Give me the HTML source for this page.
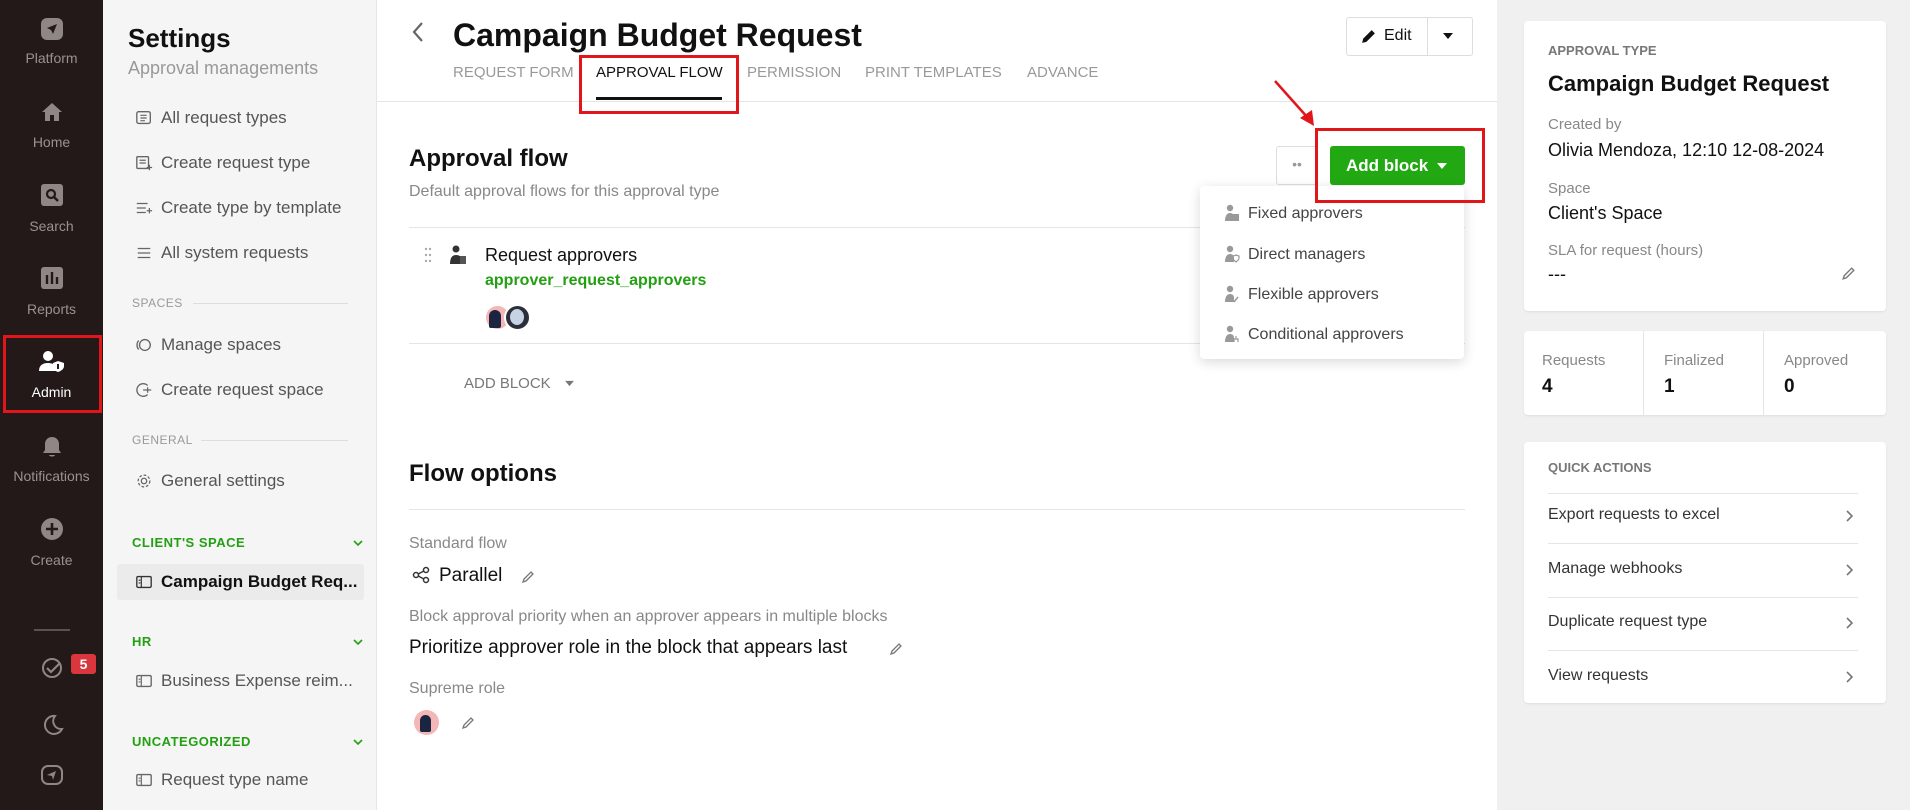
<!DOCTYPE html>
<html><head><meta charset="utf-8"><style>
*{margin:0;padding:0;box-sizing:border-box}
body{width:1910px;height:810px;overflow:hidden;font-family:"Liberation Sans",sans-serif;background:#f0f0f0;position:relative;color:#111}
.a{position:absolute;white-space:nowrap}
#nav{left:0;top:0;width:103px;height:810px;background:#231918}
.ni{position:absolute;left:0;width:103px;text-align:center;color:#9a9290;font-size:14px}
.ic{position:absolute;left:40px;width:24px;height:24px}
#set{left:103px;top:0;width:274px;height:810px;background:#f5f5f5;border-right:1px solid #e6e6e6}
.si{position:absolute;left:58px;font-size:17px;color:#555;line-height:24px}
.sic{position:absolute;left:32px;width:18px;height:18px}
.sh{position:absolute;left:29px;font-size:12px;color:#999;letter-spacing:.5px;line-height:16px}
.gh{position:absolute;left:29px;font-size:13px;color:#22a012;font-weight:bold;letter-spacing:.5px;line-height:16px}
.chev{position:absolute;left:250px;width:10px;height:10px}
#main{left:377px;top:0;width:1120px;height:810px;background:#fff}
.tab{position:absolute;top:64px;font-size:15px;color:#999;line-height:18px}
.card{position:absolute;left:1524px;width:362px;background:#fff;border-radius:4px;box-shadow:0 1px 2px rgba(0,0,0,.08)}
.lbl{position:absolute;left:24px;font-size:15px;color:#888;line-height:20px}
.val{position:absolute;left:24px;font-size:18px;color:#111;line-height:22px}
.qa{position:absolute;left:24px;width:300px;font-size:16px;color:#333;line-height:22px}
.qline{position:absolute;left:24px;width:310px;height:1px;background:#e5e5e5}
.red{position:absolute;border:3px solid #e0161b}
.mi{position:absolute;left:48px;font-size:16px;color:#444;line-height:20px}
</style></head><body>

<div id="nav" class="a">
 <svg class="ic" style="top:17px" viewBox="0 0 24 24"><rect x="1" y="1" width="22" height="22" rx="6" fill="#8e8785"/><path d="M17 7L7 11l4 2 2 4z" fill="#231918"/></svg>
 <div class="ni" style="top:50px">Platform</div>
 <svg class="ic" style="top:100px" viewBox="0 0 24 24"><path d="M12 3L2 12h3v9h5v-6h4v6h5v-9h3z" fill="#8e8785"/></svg>
 <div class="ni" style="top:134px">Home</div>
 <svg class="ic" style="top:183px" viewBox="0 0 24 24"><rect x="1" y="1" width="22" height="22" rx="3" fill="#8e8785"/><circle cx="11" cy="11" r="4" fill="none" stroke="#231918" stroke-width="2.2"/><path d="M14 14l4 4" stroke="#231918" stroke-width="2.4"/></svg>
 <div class="ni" style="top:218px">Search</div>
 <svg class="ic" style="top:266px" viewBox="0 0 24 24"><rect x="1" y="1" width="22" height="22" rx="3" fill="#8e8785"/><path d="M7 9v9M12 6v12M17 11v7" stroke="#231918" stroke-width="2.4"/></svg>
 <div class="ni" style="top:301px">Reports</div>
 <svg class="ic" style="top:350px;left:38px;width:28px" viewBox="0 0 28 24"><circle cx="10" cy="6" r="5" fill="#fff"/><path d="M1 21c0-6 4-8 9-8s7 2 8 4v4z" fill="#fff"/><path d="M20 11l6 2v3c0 3-3 5-6 6-3-1-5-3-5-6v-3z" fill="#fff"/><path d="M20 14v5" stroke="#231918" stroke-width="2"/></svg>
 <div class="ni" style="top:384px;color:#fff">Admin</div>
 <svg class="ic" style="top:435px" viewBox="0 0 24 24"><path d="M12 2c-4 0-7 3-7 7v6l-2 3h18l-2-3V9c0-4-3-7-7-7z M9 20h6c0 2-6 2-6 0z" fill="#8e8785"/></svg>
 <div class="ni" style="top:468px">Notifications</div>
 <svg class="ic" style="top:517px" viewBox="0 0 24 24"><circle cx="12" cy="12" r="11" fill="#8e8785"/><path d="M12 6v12M6 12h12" stroke="#231918" stroke-width="2.6"/></svg>
 <div class="ni" style="top:552px">Create</div>
 <div class="a" style="left:34px;top:629px;width:36px;height:2px;background:#5a5150"></div>
 <svg class="ic" style="top:656px" viewBox="0 0 24 24"><circle cx="12" cy="12" r="9" fill="none" stroke="#8e8785" stroke-width="2"/><path d="M7 12l4 4 9-9" fill="none" stroke="#8e8785" stroke-width="2.2"/></svg>
 <div class="a" style="left:71px;top:654px;width:25px;height:20px;background:#d9363e;border-radius:3px;color:#fff;font-size:14px;font-weight:bold;text-align:center;line-height:20px">5</div>
 <svg class="ic" style="top:713px" viewBox="0 0 24 24"><path d="M15 3a9 9 0 1 0 7 13A8 8 0 0 1 15 3z" fill="none" stroke="#8e8785" stroke-width="2"/></svg>
 <svg class="ic" style="top:763px" viewBox="0 0 24 24"><rect x="2" y="3" width="20" height="18" rx="6" fill="none" stroke="#8e8785" stroke-width="2"/><path d="M16 8l-9 4 5 1 1 4z" fill="#8e8785"/></svg>
</div>
<div class="red" style="left:3px;top:335px;width:99px;height:78px"></div>

<div id="set" class="a">
 <div class="a" style="left:25px;top:22px;font-size:26px;font-weight:bold;line-height:32px">Settings</div>
 <div class="a" style="left:25px;top:57px;font-size:18px;color:#999;line-height:22px">Approval managements</div>
 <svg class="sic" style="top:109px" viewBox="0 0 20 20"><rect x="2" y="3" width="15" height="13" rx="2" fill="none" stroke="#666" stroke-width="1.5"/><path d="M6 7h7M6 10h7M6 13h5" stroke="#666" stroke-width="1.3"/></svg>
 <div class="si" style="top:106px">All request types</div>
 <svg class="sic" style="top:154px" viewBox="0 0 20 20"><rect x="2" y="3" width="13" height="13" rx="1" fill="none" stroke="#666" stroke-width="1.5"/><path d="M5 7h7M5 10h7M13 15h6M16 12v6" stroke="#666" stroke-width="1.4"/></svg>
 <div class="si" style="top:151px">Create request type</div>
 <svg class="sic" style="top:199px" viewBox="0 0 20 20"><path d="M2 5h12M2 10h10M2 15h10M13 13h6M16 10v6" stroke="#666" stroke-width="1.4"/></svg>
 <div class="si" style="top:196px">Create type by template</div>
 <svg class="sic" style="top:244px" viewBox="0 0 20 20"><path d="M3 5h14M3 10h14M3 15h14" stroke="#666" stroke-width="1.4"/></svg>
 <div class="si" style="top:241px">All system requests</div>
 <div class="sh" style="top:295px">SPACES</div>
 <div class="a" style="left:90px;top:303px;width:155px;height:1px;background:#ddd"></div>
 <svg class="sic" style="top:336px" viewBox="0 0 20 20"><circle cx="11" cy="10" r="6" fill="none" stroke="#666" stroke-width="1.5"/><path d="M4 5a8 8 0 0 0 0 10" fill="none" stroke="#666" stroke-width="1.5"/></svg>
 <div class="si" style="top:333px">Manage spaces</div>
 <svg class="sic" style="top:381px" viewBox="0 0 20 20"><path d="M14 5a7 7 0 1 0 0 10" fill="none" stroke="#666" stroke-width="1.5"/><path d="M9 10h9M14 7v6" stroke="#666" stroke-width="1.4"/></svg>
 <div class="si" style="top:378px">Create request space</div>
 <div class="sh" style="top:432px">GENERAL</div>
 <div class="a" style="left:98px;top:440px;width:147px;height:1px;background:#ddd"></div>
 <svg class="sic" style="top:472px" viewBox="0 0 20 20"><circle cx="10" cy="10" r="3" fill="none" stroke="#666" stroke-width="1.4"/><circle cx="10" cy="10" r="6.5" fill="none" stroke="#666" stroke-width="1.4" stroke-dasharray="3 2"/></svg>
 <div class="si" style="top:469px">General settings</div>
 <div class="gh" style="top:535px">CLIENT'S SPACE</div>
 <svg class="chev" style="top:538px" viewBox="0 0 10 10"><path d="M1 3l4 4 4-4" fill="none" stroke="#22a012" stroke-width="1.6"/></svg>
 <div class="a" style="left:14px;top:564px;width:247px;height:36px;background:#ebebeb;border-radius:3px"></div>
 <svg class="sic" style="top:573px" viewBox="0 0 20 20"><rect x="2" y="4" width="16" height="12" rx="1.5" fill="none" stroke="#333" stroke-width="1.5"/><path d="M7 4v12M4 8h2M4 11h2" stroke="#333" stroke-width="1.3"/></svg>
 <div class="si" style="top:570px;color:#111;font-weight:bold">Campaign Budget Req...</div>
 <div class="gh" style="top:634px">HR</div>
 <svg class="chev" style="top:637px" viewBox="0 0 10 10"><path d="M1 3l4 4 4-4" fill="none" stroke="#22a012" stroke-width="1.6"/></svg>
 <svg class="sic" style="top:672px" viewBox="0 0 20 20"><rect x="2" y="4" width="16" height="12" rx="1.5" fill="none" stroke="#666" stroke-width="1.5"/><path d="M7 4v12M4 8h2M4 11h2" stroke="#666" stroke-width="1.3"/></svg>
 <div class="si" style="top:669px">Business Expense reim...</div>
 <div class="gh" style="top:734px">UNCATEGORIZED</div>
 <svg class="chev" style="top:737px" viewBox="0 0 10 10"><path d="M1 3l4 4 4-4" fill="none" stroke="#22a012" stroke-width="1.6"/></svg>
 <svg class="sic" style="top:771px" viewBox="0 0 20 20"><rect x="2" y="4" width="16" height="12" rx="1.5" fill="none" stroke="#666" stroke-width="1.5"/><path d="M7 4v12M4 8h2M4 11h2" stroke="#666" stroke-width="1.3"/></svg>
 <div class="si" style="top:768px">Request type name</div>
</div>

<div id="main" class="a">
 <svg class="a" style="left:33px;top:20px;width:16px;height:24px" viewBox="0 0 16 24"><path d="M12 3L4 12l8 9" fill="none" stroke="#666" stroke-width="2.2"/></svg>
 <div class="a" style="left:76px;top:15px;font-size:32px;font-weight:bold;line-height:40px">Campaign Budget Request</div>
 <div class="tab" style="left:76px">REQUEST FORM</div>
 <div class="tab" style="left:219px;color:#111">APPROVAL FLOW</div>
 <div class="a" style="left:219px;top:97px;width:126px;height:3px;background:#111"></div>
 <div class="tab" style="left:370px">PERMISSION</div>
 <div class="tab" style="left:488px">PRINT TEMPLATES</div>
 <div class="tab" style="left:650px">ADVANCE</div>
 <div class="a" style="left:0;top:101px;width:1120px;height:1px;background:#e5e5e5"></div>
 <div class="a" style="left:969px;top:17px;width:127px;height:39px;border:1px solid #ddd;border-radius:3px"></div>
 <div class="a" style="left:1050px;top:18px;width:1px;height:37px;background:#ddd"></div>
 <svg class="a" style="left:983px;top:28px;width:17px;height:17px" viewBox="0 0 16 16"><path d="M2 14l1-4 8-8 3 3-8 8z" fill="#111"/></svg>
 <div class="a" style="left:1007px;top:26px;font-size:16px;line-height:20px">Edit</div>
 <svg class="a" style="left:1066px;top:32px;width:10px;height:8px" viewBox="0 0 10 8"><path d="M0 1h10L5 7z" fill="#111"/></svg>

 <div class="a" style="left:32px;top:144px;font-size:24px;font-weight:bold;line-height:30px">Approval flow</div>
 <div class="a" style="left:32px;top:182px;font-size:16px;color:#888;line-height:20px">Default approval flows for this approval type</div>
 <div class="a" style="left:899px;top:146px;width:42px;height:39px;border:1px solid #ddd;border-radius:3px;color:#999;text-align:center;font-size:14px;line-height:34px">••</div>
 <div class="a" style="left:953px;top:146px;width:135px;height:39px;background:#22a812;border-radius:3px;color:#fff;font-size:17px;font-weight:bold;line-height:39px;padding-left:16px">Add block</div>
 <svg class="a" style="left:1060px;top:162px;width:10px;height:8px" viewBox="0 0 10 8"><path d="M0 1h10L5 7z" fill="#fff"/></svg>
 <div class="a" style="left:32px;top:227px;width:1056px;height:1px;background:#e5e5e5"></div>
 <svg class="a" style="left:47px;top:247px;width:8px;height:16px" viewBox="0 0 8 16"><g fill="#aaa"><circle cx="2" cy="2" r="1.2"/><circle cx="6" cy="2" r="1.2"/><circle cx="2" cy="8" r="1.2"/><circle cx="6" cy="8" r="1.2"/><circle cx="2" cy="14" r="1.2"/><circle cx="6" cy="14" r="1.2"/></g></svg>
 <svg class="a" style="left:72px;top:245px;width:18px;height:20px" viewBox="0 0 18 20"><circle cx="7" cy="4" r="3.5" fill="#333"/><path d="M1 19c0-6 2-9 6-9s5 2 5 4v5z" fill="#333"/><rect x="11" y="11" width="6" height="8" fill="#555"/></svg>
 <div class="a" style="left:108px;top:244px;font-size:18px;line-height:22px">Request approvers</div>
 <div class="a" style="left:108px;top:271px;font-size:16px;color:#22a012;font-weight:bold;line-height:20px">approver_request_approvers</div>
 <div class="a" style="left:107px;top:304px;width:27px;height:27px;border-radius:50%;background:#f4b6b6;border:2px solid #fff"></div>
 <div class="a" style="left:112px;top:310px;width:12px;height:18px;border-radius:6px 6px 2px 2px;background:#1c2540"></div>
 <div class="a" style="left:127px;top:304px;width:27px;height:27px;border-radius:50%;background:#2b2f3a;border:2px solid #fff"></div>
 <div class="a" style="left:133px;top:309px;width:14px;height:16px;border-radius:50%;background:#c7d2e3"></div>
 <div class="a" style="left:32px;top:343px;width:1056px;height:1px;background:#e5e5e5"></div>
 <div class="a" style="left:87px;top:375px;font-size:15px;color:#777;line-height:18px">ADD BLOCK</div>
 <svg class="a" style="left:188px;top:380px;width:9px;height:7px" viewBox="0 0 10 8"><path d="M0 1h10L5 7z" fill="#777"/></svg>

 <div class="a" style="left:32px;top:459px;font-size:24px;font-weight:bold;line-height:30px">Flow options</div>
 <div class="a" style="left:32px;top:509px;width:1056px;height:1px;background:#e5e5e5"></div>
 <div class="a" style="left:32px;top:534px;font-size:16px;color:#888;line-height:20px">Standard flow</div>
 <svg class="a" style="left:35px;top:566px;width:18px;height:18px" viewBox="0 0 18 18"><circle cx="4" cy="9" r="2.5" fill="none" stroke="#333" stroke-width="1.5"/><circle cx="14" cy="4" r="2.5" fill="none" stroke="#333" stroke-width="1.5"/><circle cx="14" cy="14" r="2.5" fill="none" stroke="#333" stroke-width="1.5"/><path d="M6 8l6-3M6 10l6 3" stroke="#333" stroke-width="1.5"/></svg>
 <div class="a" style="left:62px;top:565px;font-size:19px;line-height:22px">Parallel</div>
 <svg class="a" style="left:143px;top:569px;width:16px;height:16px" viewBox="0 0 16 16"><path d="M3 13l1-3 7-7 2 2-7 7z" fill="none" stroke="#777" stroke-width="1.3"/></svg>
 <div class="a" style="left:32px;top:607px;font-size:16px;color:#888;line-height:20px">Block approval priority when an approver appears in multiple blocks</div>
 <div class="a" style="left:32px;top:637px;font-size:19px;line-height:22px">Prioritize approver role in the block that appears last</div>
 <svg class="a" style="left:511px;top:641px;width:16px;height:16px" viewBox="0 0 16 16"><path d="M3 13l1-3 7-7 2 2-7 7z" fill="none" stroke="#777" stroke-width="1.3"/></svg>
 <div class="a" style="left:32px;top:679px;font-size:16px;color:#888;line-height:20px">Supreme role</div>
 <div class="a" style="left:37px;top:710px;width:25px;height:25px;border-radius:50%;background:#f4b6b6"></div>
 <div class="a" style="left:43px;top:715px;width:11px;height:17px;border-radius:6px 6px 2px 2px;background:#1c2540"></div>
 <svg class="a" style="left:83px;top:715px;width:16px;height:16px" viewBox="0 0 16 16"><path d="M3 13l1-3 7-7 2 2-7 7z" fill="none" stroke="#777" stroke-width="1.3"/></svg>

 <div class="a" style="left:823px;top:186px;width:264px;height:173px;background:#fff;border-radius:4px;box-shadow:0 3px 12px rgba(0,0,0,.15)">
  <svg class="a" style="left:24px;top:18px;width:16px;height:18px" viewBox="0 0 16 18"><circle cx="6" cy="4" r="3.2" fill="#999"/><path d="M1 17c0-5 2-8 5-8s4 2 4 4v4z" fill="#999"/><rect x="9" y="10" width="6" height="7" fill="#999"/></svg>
  <div class="mi" style="top:18px">Fixed approvers</div>
  <svg class="a" style="left:24px;top:59px;width:16px;height:18px" viewBox="0 0 16 18"><circle cx="6" cy="4" r="3.2" fill="#999"/><path d="M1 17c0-5 2-8 5-8s4 2 4 4v4z" fill="#999"/><path d="M12 10l3 1v2c0 2-2 3-3 4-1-1-3-2-3-4v-2z" fill="none" stroke="#999" stroke-width="1.2"/></svg>
  <div class="mi" style="top:59px">Direct managers</div>
  <svg class="a" style="left:24px;top:99px;width:16px;height:18px" viewBox="0 0 16 18"><circle cx="6" cy="4" r="3.2" fill="#999"/><path d="M1 17c0-5 2-8 5-8s4 2 4 4v4z" fill="#999"/><path d="M10 17l4-5" stroke="#999" stroke-width="1.5"/></svg>
  <div class="mi" style="top:99px">Flexible approvers</div>
  <svg class="a" style="left:24px;top:139px;width:16px;height:18px" viewBox="0 0 16 18"><circle cx="6" cy="4" r="3.2" fill="#999"/><path d="M1 17c0-5 2-8 5-8s4 2 4 4v4z" fill="#999"/><path d="M12 11v3M10 17v-3h4v3" fill="none" stroke="#999" stroke-width="1.2"/></svg>
  <div class="mi" style="top:139px">Conditional approvers</div>
 </div>
</div>
<div class="red" style="left:579px;top:55px;width:160px;height:59px"></div>
<div class="red" style="left:1315px;top:128px;width:170px;height:75px"></div>
<svg class="a" style="left:1270px;top:78px;width:50px;height:52px" viewBox="0 0 50 52"><path d="M5 3L38 40" stroke="#e0161b" stroke-width="2.5"/><path d="M44 48L30 40l12-8z" fill="#e0161b"/></svg>

<div class="card" style="top:21px;height:290px">
 <div class="a" style="left:24px;top:22px;font-size:13px;font-weight:bold;color:#777;line-height:16px">APPROVAL TYPE</div>
 <div class="a" style="left:24px;top:50px;font-size:22px;line-height:26px;font-weight:bold">Campaign Budget Request</div>
 <div class="lbl" style="top:94px">Created by</div>
 <div class="val" style="top:118px">Olivia Mendoza, 12:10 12-08-2024</div>
 <div class="lbl" style="top:158px">Space</div>
 <div class="val" style="top:181px">Client's Space</div>
 <div class="lbl" style="top:220px">SLA for request (hours)</div>
 <div class="val" style="top:242px">---</div>
 <svg class="a" style="left:316px;top:244px;width:17px;height:17px" viewBox="0 0 16 16"><path d="M3 13l1-3 7-7 2 2-7 7z" fill="none" stroke="#777" stroke-width="1.3"/></svg>
</div>
<div class="card" style="top:331px;height:84px">
 <div class="a" style="left:119px;top:0;width:1px;height:84px;background:#e5e5e5"></div>
 <div class="a" style="left:239px;top:0;width:1px;height:84px;background:#e5e5e5"></div>
 <div class="lbl" style="left:18px;top:20px">Requests</div><div class="val" style="left:18px;top:45px;font-weight:bold;font-size:19px">4</div>
 <div class="lbl" style="left:140px;top:20px">Finalized</div><div class="val" style="left:140px;top:45px;font-weight:bold;font-size:19px">1</div>
 <div class="lbl" style="left:260px;top:20px">Approved</div><div class="val" style="left:260px;top:45px;font-weight:bold;font-size:19px">0</div>
</div>
<div class="card" style="top:442px;height:261px">
 <div class="a" style="left:24px;top:18px;font-size:13px;font-weight:bold;color:#777;line-height:16px">QUICK ACTIONS</div>
 <div class="qline" style="top:51px"></div>
 <div class="qa" style="top:62px">Export requests to excel</div>
 <div class="qline" style="top:101px"></div>
 <div class="qa" style="top:116px">Manage webhooks</div>
 <div class="qline" style="top:155px"></div>
 <div class="qa" style="top:169px">Duplicate request type</div>
 <div class="qline" style="top:208px"></div>
 <div class="qa" style="top:223px">View requests</div>
 <svg class="a" style="left:320px;top:66px;width:10px;height:180px" viewBox="0 0 10 180"><g fill="none" stroke="#777" stroke-width="1.6"><path d="M3 3l5 5-5 5"/><path d="M3 57l5 5-5 5"/><path d="M3 110l5 5-5 5"/><path d="M3 164l5 5-5 5"/></g></svg>
</div>
</body></html>
